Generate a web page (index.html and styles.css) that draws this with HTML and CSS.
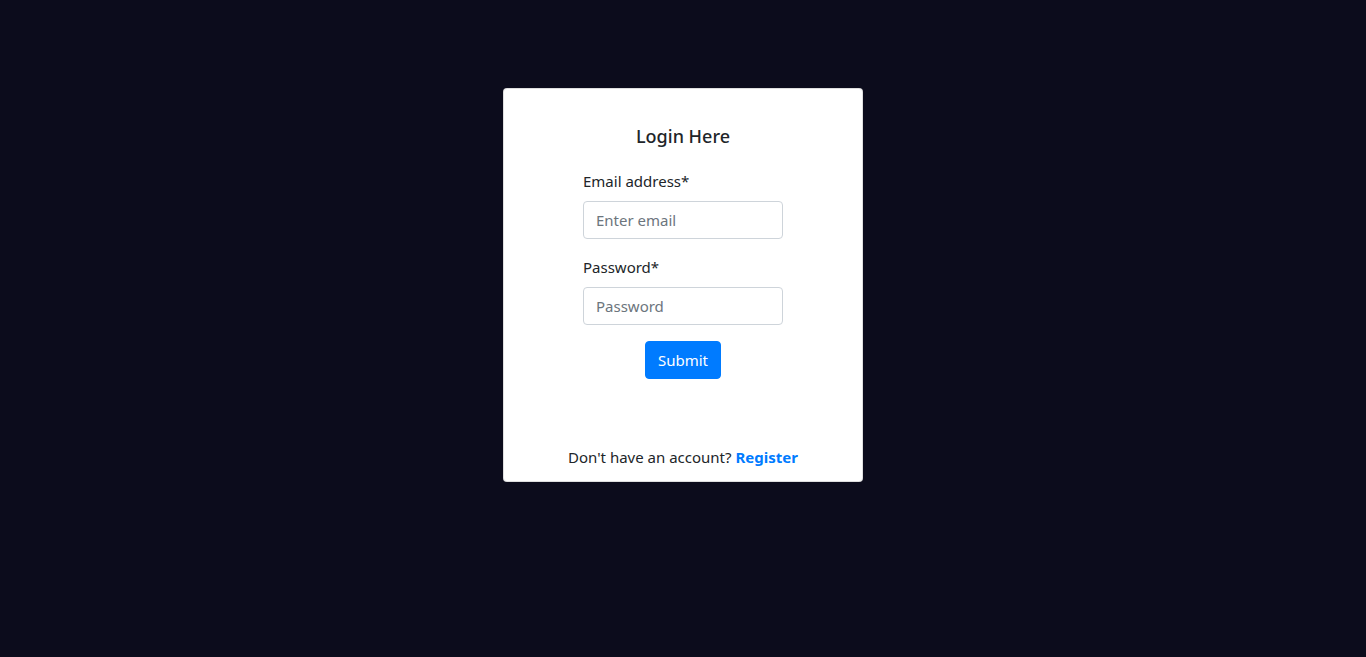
FILE: index.html
```html
<!DOCTYPE html>
<html lang="en">

<head>
    <meta charset="UTF-8" />
    <meta name="viewport" content="width=device-width, initial-scale=1.0" />
    <title>Login</title>
    <link rel="stylesheet" href="styles.css">
</head>

<body>
    <!-- Login Card -->
    <div class="card">
        <h5 class="card-title">Login Here</h5>

        <form class="login-form" onsubmit="return false;">
            <div class="form-group">
                <label for="email">Email address*</label>
                <input type="email" id="email" class="form-control" placeholder="Enter email" />
            </div>
            <div class="form-group">
                <label for="password">Password*</label>
                <input type="password" id="password" class="form-control" placeholder="Password" />
            </div>
            <div class="actions">
                <button type="submit" class="btn">Submit</button>
            </div>
        </form>

        <p class="footer-text">Don't have an account? <a href="#" class="register">Register</a></p>
    </div>
</body>

</html>
```

FILE: styles.css
```css
html,
body {
    margin: 0;
    padding: 0;
    min-height: 100vh;
    background-color: #0c0c1c;
    font-family: 'Noto Sans', 'Open Sans', sans-serif;
    font-size: 15px;
    line-height: 24px;
    color: #212529;
}

body {
    display: flex;
    justify-content: center;
    align-items: flex-start;
}

/* Card */
.card {
    margin-top: 88px;
    width: 360px;
    box-sizing: border-box;
    background-color: #fff;
    border: 1px solid rgba(0, 0, 0, 0.125);
    border-radius: 4px;
    padding: 35px 20px 12px;
    display: flex;
    flex-direction: column;
    align-items: center;
}

.card-title {
    margin: 0 0 21px;
    font-size: 18px;
    font-weight: 500;
    line-height: 24px;
    text-align: center;
}

.login-form {
    width: 200px;
}

.form-group {
    margin-bottom: 16px;
}

.form-group label {
    display: block;
    margin-bottom: 8px;
}

.form-control {
    display: block;
    width: 100%;
    height: 38px;
    box-sizing: border-box;
    padding: 6px 12px;
    font-family: inherit;
    font-size: 15px;
    color: #495057;
    background-color: #fff;
    border: 1px solid #ced4da;
    border-radius: 4px;
}

.form-control::placeholder {
    color: #6c757d;
}

.actions {
    display: flex;
    justify-content: center;
}

.btn {
    height: 38px;
    padding: 6px 12px;
    font-family: inherit;
    font-size: 15px;
    color: #fff;
    background-color: #007bff;
    border: 1px solid #007bff;
    border-radius: 4px;
    cursor: pointer;
}

.footer-text {
    margin: 66px 0 0;
    text-align: center;
}

.register {
    color: #007bff;
    font-weight: 700;
    text-decoration: none;
}
```
